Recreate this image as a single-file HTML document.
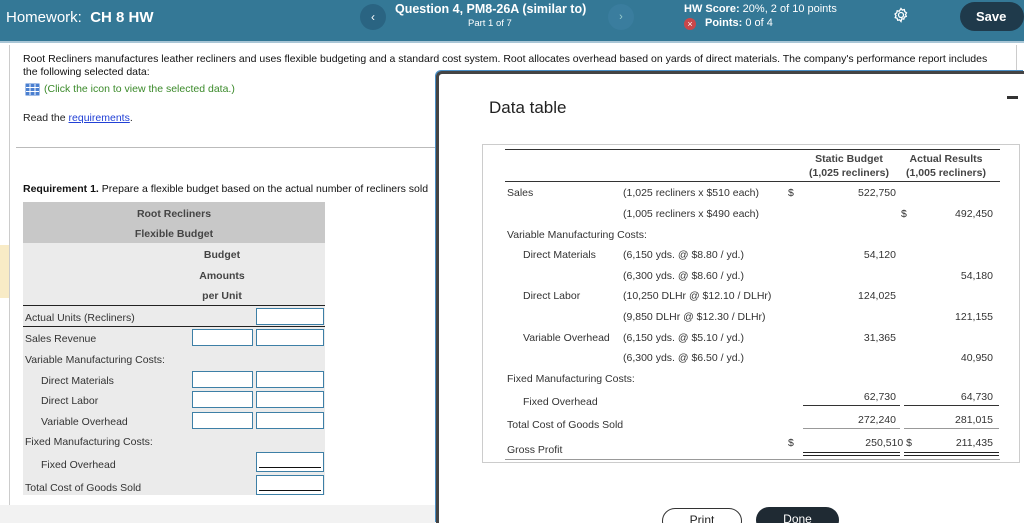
<!DOCTYPE html>
<html><head><meta charset="utf-8"><style>
*{margin:0;padding:0;box-sizing:border-box}
html,body{width:1024px;height:523px;overflow:hidden}
body{background:#fff;font-family:"Liberation Sans",Arial,sans-serif;color:#222}
#w{position:relative;width:1024px;height:523px;overflow:hidden}
.a{position:absolute;white-space:nowrap}
.hdr{left:0;top:0;width:1024px;height:43px;background:#347896;border-bottom:2px solid #a9c6d6}
.f10{font-size:10.5px}
.box{position:absolute;background:#fff;border:1px solid #3d7fa6}
.r{text-align:right}
.ln{position:absolute;height:1px;background:#333}
</style></head><body><div id="w">
<div class="a hdr"></div>
<div class="a" style="left:6px;top:9px;color:#fff;font-size:15px">Homework: &nbsp;<b>CH 8 HW</b></div>
<div class="a" style="left:360px;top:4px;width:26px;height:26px;border-radius:13px;background:#2a6482;color:#fff;font-size:12px;text-align:center;line-height:26px">‹</div>
<div class="a" style="left:395px;top:2px;color:#fff;font-size:12.5px;font-weight:bold">Question 4, PM8-26A (similar to)</div>
<div class="a" style="left:468px;top:18px;color:#fff;font-size:9.5px">Part 1 of 7</div>
<div class="a" style="left:608px;top:4px;width:26px;height:26px;border-radius:13px;background:#3a7d9e;color:#9cc;font-size:11px;text-align:center;line-height:26px">›</div>
<div class="a" style="left:684px;top:3px;color:#fff;font-size:11px"><b>HW Score:</b> 20%, 2 of 10 points</div>
<div class="a" style="left:684px;top:18px;width:12px;height:12px;border-radius:6px;background:#c9474a;color:#fff;font-size:9px;text-align:center;line-height:12px">×</div>
<div class="a" style="left:705px;top:17px;color:#fff;font-size:11px"><b>Points:</b> 0 of 4</div>
<svg class="a" style="left:893px;top:7px" width="16" height="16" viewBox="0 0 16 16"><circle cx="8" cy="8" r="2.5" fill="none" stroke="#fff" stroke-width="1.3"/><path d="M8 1.5l1.3 1.6 2-.5.5 2 1.7 1.2-1 1.7.8 1.9-1.9.7-.6 2-2-.4L8 14.5l-1.3-1.6-2 .4-.6-2-1.9-.7.8-1.9-1-1.7 1.7-1.2.5-2 2 .5z" fill="none" stroke="#fff" stroke-width="1.3"/></svg>
<div class="a" style="left:960px;top:2px;width:64px;height:29px;border-radius:15px;background:#1f3a4b;color:#fff;font-size:13px;font-weight:bold;line-height:29px;padding-left:16px">Save</div>

<div class="a" style="left:9px;top:45px;width:1px;height:460px;background:#ccc"></div>
<div class="a" style="left:0;top:245px;width:9px;height:53px;background:#f8ebc6"></div>
<div class="a" style="left:0;top:505px;width:440px;height:18px;background:#f2f2f2"></div>
<div class="a" style="left:1016px;top:45px;width:8px;height:28px;border-left:1px solid #ccc"></div>
<div class="a f10" style="left:23px;top:53px;color:#111">Root Recliners manufactures leather recliners and uses flexible budgeting and a standard cost system. Root allocates overhead based on yards of direct materials. The company's performance report includes</div>
<div class="a f10" style="left:23px;top:66px;color:#111">the following selected data:</div>
<svg class="a" style="left:25px;top:83px" width="15" height="13"><rect x="0.5" y="0.5" width="14" height="12" fill="#4a7fd0"/><path d="M1 4.5h13M1 8.5h13M5 1v11M10 1v11" stroke="#fff" stroke-width="1"/></svg>
<div class="a f10" style="left:44px;top:83px;color:#3b8a2a">(Click the icon to view the selected data.)</div>
<div class="a f10" style="left:23px;top:112px">Read the <span style="color:#2140d6;text-decoration:underline">requirements</span>.</div>
<div class="a" style="left:16px;top:147px;width:422px;height:1px;background:#bbb"></div>
<div class="a f10" style="left:23px;top:183px;color:#111"><b>Requirement 1.</b> Prepare a flexible budget based on the actual number of recliners sold</div>

<div class="a" style="left:23px;top:202px;width:302px;height:41px;background:#c8c8c8"></div>
<div class="a" style="left:23px;top:243px;width:302px;height:252px;background:#ebebeb"></div>
<div class="a f10" style="left:23px;top:208px;width:302px;text-align:center;font-weight:bold;color:#444">Root Recliners</div>
<div class="a f10" style="left:23px;top:228px;width:302px;text-align:center;font-weight:bold;color:#444">Flexible Budget</div>
<div class="a f10" style="left:192px;top:249px;width:60px;text-align:center;font-weight:bold;color:#444">Budget</div>
<div class="a f10" style="left:192px;top:270px;width:60px;text-align:center;font-weight:bold;color:#444">Amounts</div>
<div class="a f10" style="left:192px;top:290px;width:60px;text-align:center;font-weight:bold;color:#444">per Unit</div>
<div class="a" style="left:23px;top:305px;width:302px;height:1px;background:#222"></div>
<div class="a" style="left:23px;top:326px;width:302px;height:1px;background:#222"></div>
<div class="a f10" style="left:25px;top:312px;color:#333">Actual Units (Recliners)</div>
<div class="a f10" style="left:25px;top:333px;color:#333">Sales Revenue</div>
<div class="a f10" style="left:25px;top:354px;color:#333">Variable Manufacturing Costs:</div>
<div class="a f10" style="left:41px;top:375px;color:#333">Direct Materials</div>
<div class="a f10" style="left:41px;top:395px;color:#333">Direct Labor</div>
<div class="a f10" style="left:41px;top:416px;color:#333">Variable Overhead</div>
<div class="a f10" style="left:25px;top:436px;color:#333">Fixed Manufacturing Costs:</div>
<div class="a f10" style="left:41px;top:459px;color:#333">Fixed Overhead</div>
<div class="a f10" style="left:25px;top:482px;color:#333">Total Cost of Goods Sold</div>
<div class="box" style="left:256px;top:308px;width:68px;height:17px"></div>
<div class="box" style="left:192px;top:329px;width:61px;height:17px"></div><div class="box" style="left:256px;top:329px;width:68px;height:17px"></div>
<div class="box" style="left:192px;top:371px;width:61px;height:17px"></div><div class="box" style="left:256px;top:371px;width:68px;height:17px"></div>
<div class="box" style="left:192px;top:391px;width:61px;height:17px"></div><div class="box" style="left:256px;top:391px;width:68px;height:17px"></div>
<div class="box" style="left:192px;top:412px;width:61px;height:17px"></div><div class="box" style="left:256px;top:412px;width:68px;height:17px"></div>
<div class="box" style="left:256px;top:452px;width:68px;height:20px"><div style="position:absolute;left:2px;right:2px;bottom:3px;height:1px;background:#111"></div></div>
<div class="box" style="left:256px;top:475px;width:68px;height:20px"><div style="position:absolute;left:2px;right:2px;bottom:3px;height:1px;background:#111"></div></div>

<div class="a" style="left:436px;top:71px;width:588px;height:452px;border:3px solid #444;border-right:none;border-bottom:none;box-shadow:-1px -1px 0 #4a8ec4;border-radius:6px 0 0 0;background:#fff"></div>
<div class="a" style="left:489px;top:98px;font-size:17px;color:#222">Data table</div>
<div class="a" style="left:1007px;top:96px;width:11px;height:3px;background:#333"></div>
<div class="a" style="left:482px;top:144px;width:538px;height:319px;border:1px solid #ccc"></div>
<div class="ln" style="left:505px;top:149px;width:495px"></div>
<div class="ln" style="left:505px;top:181px;width:495px"></div>
<div class="ln" style="left:505px;top:459px;width:495px;background:#999"></div>
<div class="a f10" style="left:800px;top:152px;width:98px;text-align:center;font-weight:bold;color:#444;line-height:14px">Static Budget<br>(1,025 recliners)</div>
<div class="a f10" style="left:902px;top:152px;width:88px;text-align:center;font-weight:bold;color:#444;line-height:14px">Actual Results<br>(1,005 recliners)</div>
<div class="a f10" style="left:507px;top:187px;color:#333">Sales</div>
<div class="a f10" style="left:507px;top:229px;color:#333">Variable Manufacturing Costs:</div>
<div class="a f10" style="left:523px;top:249px;color:#333">Direct Materials</div>
<div class="a f10" style="left:523px;top:290px;color:#333">Direct Labor</div>
<div class="a f10" style="left:523px;top:332px;color:#333">Variable Overhead</div>
<div class="a f10" style="left:507px;top:373px;color:#333">Fixed Manufacturing Costs:</div>
<div class="a f10" style="left:523px;top:396px;color:#333">Fixed Overhead</div>
<div class="a f10" style="left:507px;top:419px;color:#333">Total Cost of Goods Sold</div>
<div class="a f10" style="left:507px;top:444px;color:#333">Gross Profit</div>
<div class="a f10" style="left:623px;top:187px;color:#333">(1,025 recliners x $510 each)</div>
<div class="a f10" style="left:623px;top:208px;color:#333">(1,005 recliners x $490 each)</div>
<div class="a f10" style="left:623px;top:249px;color:#333">(6,150 yds. @ $8.80 / yd.)</div>
<div class="a f10" style="left:623px;top:270px;color:#333">(6,300 yds. @ $8.60 / yd.)</div>
<div class="a f10" style="left:623px;top:290px;color:#333">(10,250 DLHr @ $12.10 / DLHr)</div>
<div class="a f10" style="left:623px;top:311px;color:#333">(9,850 DLHr @ $12.30 / DLHr)</div>
<div class="a f10" style="left:623px;top:332px;color:#333">(6,150 yds. @ $5.10 / yd.)</div>
<div class="a f10" style="left:623px;top:352px;color:#333">(6,300 yds. @ $6.50 / yd.)</div>
<div class="a f10" style="left:788px;top:187px;color:#333">$</div>
<div class="a f10 r" style="left:800px;top:187px;width:96px;color:#333">522,750</div>
<div class="a f10" style="left:901px;top:208px;color:#333">$</div>
<div class="a f10 r" style="left:900px;top:208px;width:93px;color:#333">492,450</div>
<div class="a f10 r" style="left:800px;top:249px;width:96px;color:#333">54,120</div>
<div class="a f10 r" style="left:900px;top:270px;width:93px;color:#333">54,180</div>
<div class="a f10 r" style="left:800px;top:290px;width:96px;color:#333">124,025</div>
<div class="a f10 r" style="left:900px;top:311px;width:93px;color:#333">121,155</div>
<div class="a f10 r" style="left:800px;top:332px;width:96px;color:#333">31,365</div>
<div class="a f10 r" style="left:900px;top:352px;width:93px;color:#333">40,950</div>
<div class="a f10 r" style="left:800px;top:391px;width:96px;color:#333">62,730</div>
<div class="a f10 r" style="left:900px;top:391px;width:93px;color:#333">64,730</div>
<div class="ln" style="left:803px;top:405px;width:97px"></div><div class="ln" style="left:904px;top:405px;width:95px"></div>
<div class="a f10 r" style="left:800px;top:414px;width:96px;color:#333">272,240</div>
<div class="a f10 r" style="left:900px;top:414px;width:93px;color:#333">281,015</div>
<div class="ln" style="left:803px;top:428px;width:97px;background:#999"></div><div class="ln" style="left:904px;top:428px;width:95px;background:#999"></div>
<div class="a f10" style="left:788px;top:437px;color:#333">$</div>
<div class="a f10 r" style="left:800px;top:437px;width:112px;color:#333">250,510 $</div>
<div class="a f10 r" style="left:900px;top:437px;width:93px;color:#333">211,435</div>
<div class="a" style="left:803px;top:452px;width:97px;height:4px;border-top:1px solid #222;border-bottom:1px solid #222"></div>
<div class="a" style="left:904px;top:452px;width:95px;height:4px;border-top:1px solid #222;border-bottom:1px solid #222"></div>
<div class="a" style="left:662px;top:508px;width:80px;height:15px;overflow:hidden"><div style="width:80px;height:26px;border:1.5px solid #333;border-radius:13px;font-size:12px;text-align:center;line-height:22px;color:#222">Print</div></div>
<div class="a" style="left:756px;top:507px;width:83px;height:16px;overflow:hidden"><div style="width:83px;height:26px;background:#1f2a33;border-radius:13px;font-size:12px;text-align:center;line-height:24px;color:#fff">Done</div></div>
</div></body></html>
